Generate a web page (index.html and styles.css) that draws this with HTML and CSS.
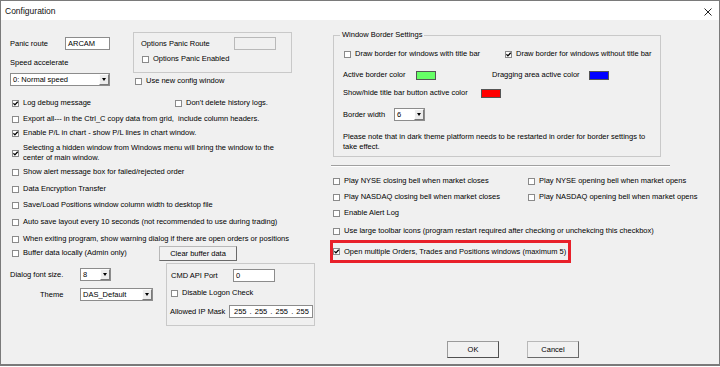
FILE: index.html
```html
<!DOCTYPE html>
<html lang="en">
  <head>
    <meta charset="UTF-8" />
    <meta name="viewport" content="width=device-width, initial-scale=1.0" />
    <title>Configuration</title>
    <link rel="stylesheet" href="styles.css">
  </head>
  <body>
    <div class="window">
      <div class="titlebar">
        <span class="title">Configuration</span>
        <svg class="close" width="8" height="8" viewBox="0 0 8 8">
          <path d="M0.5 0.5 L7.5 7.5 M7.5 0.5 L0.5 7.5" stroke="#222" stroke-width="1" fill="none" />
        </svg>
      </div>

      <div class="content">
        <!-- left half -->
        <div class="col-left">
          <div class="top">
            <div class="top-left">
              <div class="row field-panic">
                <span class="lbl-panic">Panic route</span>
                <span class="edit edit-panic">ARCAM</span>
              </div>
              <div class="lbl-speed">Speed accelerate</div>
              <div class="combo combo-speed">
                <span class="combo-text">0: Normal speed</span>
                <span class="combo-btn"></span>
              </div>
            </div>
            <div class="top-right">
              <div class="group group-options">
                <div class="row">
                  <span class="lbl-options">Options Panic Route</span>
                  <span class="edit edit-options disabled"></span>
                </div>
                <div class="check check-opt-enabled"><span class="cb"></span>Options Panic Enabled</div>
              </div>
              <div class="check check-newcfg"><span class="cb"></span>Use new config window</div>
            </div>
          </div>

          <div class="checks">
            <div class="row pair">
              <div class="check w-log"><span class="cb on"><svg viewBox="0 0 5 5"><path d="M0.4 2.3 L1.9 3.9 L4.7 0.8" /></svg></span>Log debug message</div>
              <div class="check"><span class="cb"></span>Don't delete history logs.</div>
            </div>
            <div class="check"><span class="cb"></span>Export all--- in the Ctrl_C copy data from grid,&nbsp; include column headers.</div>
            <div class="check"><span class="cb on"><svg viewBox="0 0 5 5"><path d="M0.4 2.3 L1.9 3.9 L4.7 0.8" /></svg></span>Enable P/L in chart - show P/L lines in chart window.</div>
            <div class="check multi"><span class="cb on"><svg viewBox="0 0 5 5"><path d="M0.4 2.3 L1.9 3.9 L4.7 0.8" /></svg></span><span>Selecting a hidden window from Windows menu will bring the window to the<br>center of main window.</span></div>
            <div class="check"><span class="cb"></span>Show alert message box for failed/rejected order</div>
            <div class="check"><span class="cb"></span>Data Encryption Transfer</div>
            <div class="check"><span class="cb"></span>Save/Load Positions window column width to desktop file</div>
            <div class="check"><span class="cb"></span>Auto save layout every 10 seconds (not recommended to use during trading)</div>
            <div class="check"><span class="cb"></span>When exiting program, show warning dialog if there are open orders or positions</div>
            <div class="row pair">
              <div class="check w-buffer"><span class="cb"></span>Buffer data locally (Admin only)</div>
              <button class="btn btn-clear">Clear buffer data</button>
            </div>
          </div>

          <div class="bottom">
            <div class="bottom-left">
              <div class="row font-row">
                <span class="lbl-font">Dialog font size.</span>
                <div class="combo combo-font">
                  <span class="combo-text">8</span>
                  <span class="combo-btn"></span>
                </div>
              </div>
              <div class="row theme-row">
                <span class="lbl-theme">Theme</span>
                <div class="combo combo-theme">
                  <span class="combo-text">DAS_Default</span>
                  <span class="combo-btn"></span>
                </div>
              </div>
            </div>
            <div class="group group-cmd">
              <div class="row">
                <span class="lbl-port">CMD API Port</span>
                <span class="edit edit-port">0</span>
              </div>
              <div class="check check-logon"><span class="cb"></span>Disable Logon Check</div>
              <div class="row ip-row">
                <span class="lbl-ip">Allowed IP Mask</span>
                <span class="edit edit-ip">255 . 255 . 255 . 255</span>
              </div>
            </div>
          </div>
        </div>

        <!-- right half -->
        <div class="col-right">
          <fieldset class="wbs">
            <legend>Window Border Settings</legend>
            <div class="wbs-body">
              <div class="row">
                <div class="check w-title"><span class="cb"></span>Draw border for windows with title bar</div>
                <div class="check"><span class="cb on"><svg viewBox="0 0 5 5"><path d="M0.4 2.3 L1.9 3.9 L4.7 0.8" /></svg></span>Draw border for windows without title bar</div>
              </div>
              <div class="row color-row">
                <span class="lbl-active">Active border color</span>
                <span class="swatch green"></span>
                <span class="lbl-drag">Dragging area active color</span>
                <span class="swatch blue"></span>
              </div>
              <div class="row color-row2">
                <span class="lbl-showhide">Show/hide title bar button active color</span>
                <span class="swatch red"></span>
              </div>
              <div class="row bw-row">
                <span class="lbl-bw">Border width</span>
                <div class="combo combo-bw">
                  <span class="combo-text">6</span>
                  <span class="combo-btn"></span>
                </div>
              </div>
              <p class="note">Please note that in dark theme platform needs to be restarted in order for border settings to<br>take effect.</p>
            </div>
          </fieldset>

          <div class="separator"></div>

          <div class="checks-right">
            <div class="row">
              <div class="check w-bell"><span class="cb"></span>Play NYSE closing bell when market closes</div>
              <div class="check"><span class="cb"></span>Play NYSE opening bell when market opens</div>
            </div>
            <div class="row">
              <div class="check w-bell"><span class="cb"></span>Play NASDAQ closing bell when market closes</div>
              <div class="check"><span class="cb"></span>Play NASDAQ opening bell when market opens</div>
            </div>
            <div class="check"><span class="cb"></span>Enable Alert Log</div>
            <div class="check"><span class="cb"></span>Use large toolbar icons (program restart required after checking or unchekcing this checkbox)</div>
          </div>

          <div class="highlight">
            <div class="check"><span class="cb on"><svg viewBox="0 0 5 5"><path d="M0.4 2.3 L1.9 3.9 L4.7 0.8" /></svg></span>Open multiple Orders, Trades and Positions windows (maximum 5)</div>
          </div>
        </div>
      </div>

      <div class="buttons">
        <button class="btn btn-ok">OK</button>
        <button class="btn btn-cancel">Cancel</button>
      </div>
    </div>
  </body>
</html>
```

FILE: styles.css
```css
* {
  box-sizing: border-box;
}
body {
  margin: 0;
  background: #fff;
  font-family: "Liberation Sans", Arial, sans-serif;
  font-size: 7.5px;
  line-height: 10px;
  color: #000;
}
.window {
  width: 720px;
  height: 366px;
  border: 1px solid #7a7a7a;
  border-bottom-width: 2px;
  background: #f0f0f0;
  display: flex;
  flex-direction: column;
}
.titlebar {
  height: 19px;
  flex: none;
  background: #fff;
  display: flex;
  align-items: center;
  justify-content: space-between;
  padding: 0 7px 0 4px;
}
.title {
  font-size: 8.5px;
  color: #111;
}
.close {
  display: block;
  margin-top: 2px;
}
.content {
  flex: 1;
  display: flex;
}
.col-left {
  width: 320px;
  margin-left: 9px;
}
.col-right {
  width: 345px;
}

/* common controls */
.row {
  display: flex;
  align-items: center;
}
.check {
  display: flex;
  align-items: center;
  white-space: nowrap;
  margin-left: 2px;
}
.cb {
  width: 7px;
  height: 7px;
  flex: none;
  border: 1px solid #8a8a8a;
  background: #fff;
  margin-right: 4px;
}
.cb svg {
  display: block;
  width: 5px;
  height: 5px;
}
.cb svg path {
  stroke: #000;
  stroke-width: 1.3;
  fill: none;
}
.edit {
  height: 13px;
  border: 1px solid #8c8c8c;
  background: #fff;
  padding-left: 2px;
  line-height: 11px;
  white-space: nowrap;
}
.edit.disabled {
  background: #f0f0f0;
  border-color: #b9b9b9;
}
.combo {
  display: flex;
  height: 13px;
  border: 1px solid #8c8c8c;
  background: #fff;
}
.combo-text {
  flex: 1;
  padding-left: 2px;
  line-height: 11px;
}
.combo-btn {
  width: 10px;
  border: 1px solid;
  border-color: #fdfdfd #7a7a7a #7a7a7a #fdfdfd;
  background: #ececec;
  display: flex;
  align-items: center;
  justify-content: center;
}
.combo-btn::after {
  content: "";
  border-left: 2.5px solid transparent;
  border-right: 2.5px solid transparent;
  border-top: 3px solid #000;
}
.group {
  border: 1px solid #c9c9c9;
}
.btn {
  font-family: inherit;
  font-size: 7.5px;
  color: #000;
  background: #f1f1f1;
  border: 1px solid;
  border-color: #b8b8b8 #6a6a6a #6a6a6a #b8b8b8;
  padding: 0;
}

/* top left block */
.top {
  display: flex;
}
.top-left {
  width: 100px;
}
.field-panic {
  margin-top: 17px;
}
.lbl-panic {
  width: 55px;
}
.edit-panic {
  width: 45px;
}
.lbl-speed {
  margin-top: 8px;
}
.combo-speed {
  margin-top: 5px;
  width: 100px;
}
.top-right {
  margin-left: 23px;
}
.group-options {
  margin-top: 12px;
  width: 159px;
  height: 41px;
  padding: 4px 0 0 7px;
}
.lbl-options {
  width: 93px;
}
.edit-options {
  width: 42px;
}
.check-opt-enabled {
  margin-top: 4px;
  margin-left: 1px;
}
.check-newcfg {
  margin-top: 3px;
}

/* left check list */
.checks {
  margin-top: 12px;
  display: grid;
  grid-template-rows: 16px 14px 15px 24px 17px 16px 17px 17px 14px 10px;
  align-items: start;
}
.pair {
  height: 10px;
}
.w-log {
  width: 161px;
}
.w-buffer {
  width: 147px;
}
.multi {
  white-space: normal;
}
.btn-clear {
  width: 78px;
  height: 15px;
  flex: none;
}

/* bottom left block */
.bottom {
  display: flex;
}
.bottom-left {
  width: 156px;
}
.font-row {
  margin-top: 10px;
}
.lbl-font,
.lbl-theme {
  width: 70px;
}
.lbl-theme {
  padding-left: 30px;
}
.combo-font {
  width: 31px;
}
.theme-row {
  margin-top: 7px;
}
.combo-theme {
  width: 73px;
}
.group-cmd {
  margin-top: 5px;
  width: 149px;
  height: 63px;
  padding: 5px 0 0 4px;
}
.lbl-port {
  width: 62px;
}
.edit-port {
  width: 42px;
}
.check-logon {
  margin-top: 6px;
  margin-left: 0;
}
.ip-row {
  margin-top: 7px;
  margin-left: -1px;
}
.lbl-ip {
  width: 59px;
}
.edit-ip {
  width: 84px;
  padding-left: 4px;
  word-spacing: 1px;
}

/* right block */
.wbs {
  margin: 10px 0 0 3px;
  width: 328px;
  height: 127px;
  min-width: 0;
  padding: 0;
  border: 1px solid #c9c9c9;
}
.wbs legend {
  margin-left: 6px;
  padding: 0 2px;
  line-height: 10px;
}
.wbs-body {
  padding: 9px 0 0 9px;
}
.w-title {
  margin-left: 1px;
  width: 159px;
}
.color-row {
  margin-top: 11px;
}
.lbl-active {
  width: 73px;
}
.lbl-drag {
  margin-left: 56px;
  width: 97px;
}
.swatch {
  width: 20px;
  height: 9px;
  border: 1px solid #555;
}
.green {
  background: #66ff66;
}
.blue {
  background: #0000ff;
}
.red {
  background: #ff0000;
}
.color-row2 {
  margin-top: 8px;
}
.lbl-showhide {
  width: 138px;
}
.bw-row {
  margin-top: 10px;
}
.lbl-bw {
  width: 51px;
}
.combo-bw {
  width: 31px;
}
.note {
  margin: 11px 0 0;
}
.separator {
  margin: 8px 0 0 1px;
  width: 339px;
  border-top: 1px solid #a0a0a0;
  border-bottom: 1px solid #fff;
}
.checks-right {
  margin-top: 9px;
  display: grid;
  grid-template-rows: 16px 16px 18px 14px;
  align-items: start;
}
.checks-right .check {
  margin-left: 3px;
}
.checks-right .row .check + .check {
  margin-left: 0;
}
.w-bell {
  width: 195px;
}
.highlight {
  width: 241px;
  height: 23px;
  border: 3px solid #e8202a;
  display: flex;
  align-items: center;
}
.highlight .check {
  margin-left: 0;
}

/* dialog buttons */
.buttons {
  flex: none;
  display: flex;
  gap: 28px;
  padding: 0 0 6px 446px;
}
.btn-ok,
.btn-cancel {
  width: 52px;
  height: 17px;
}
.btn-ok {
  border-color: #9a9a9a #505050 #505050 #9a9a9a;
}
```
